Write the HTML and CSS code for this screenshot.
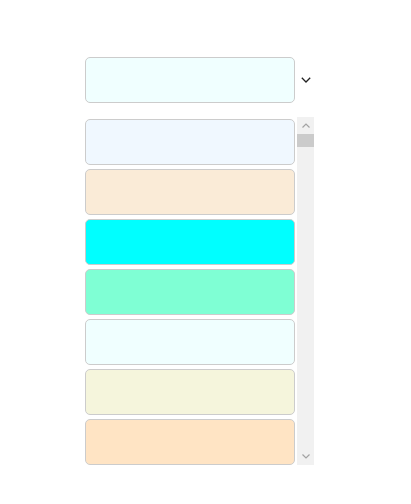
FILE: index.html
```html
<!DOCTYPE html>
<html>
<head>
<meta charset="utf-8">
<link rel="stylesheet" href="styles.css">
</head>
<body>
<div class="picker">
  <div class="selected-row">
    <div class="swatch selected" style="background: azure"></div>
    <svg class="chevron" width="10" height="6" viewBox="0 0 10 6"><path d="M0.8 0.8 L5 5 L9.2 0.8" fill="none" stroke="#222" stroke-width="1.3"/></svg>
  </div>
  <div class="list-wrap">
  <div class="list">
    <div class="swatch" style="background: aliceblue"></div>
    <div class="swatch" style="background: antiquewhite"></div>
    <div class="swatch" style="background: aqua"></div>
    <div class="swatch" style="background: aquamarine"></div>
    <div class="swatch" style="background: azure"></div>
    <div class="swatch" style="background: beige"></div>
    <div class="swatch" style="background: bisque"></div>
    <div class="swatch" style="background: black"></div>
    <div class="swatch" style="background: blanchedalmond"></div>
    <div class="swatch" style="background: blue"></div>
    <div class="swatch" style="background: blueviolet"></div>
    <div class="swatch" style="background: brown"></div>
    <div class="swatch" style="background: burlywood"></div>
    <div class="swatch" style="background: cadetblue"></div>
    <div class="swatch" style="background: chartreuse"></div>
    <div class="swatch" style="background: chocolate"></div>
    <div class="swatch" style="background: coral"></div>
    <div class="swatch" style="background: cornflowerblue"></div>
    <div class="swatch" style="background: cornsilk"></div>
    <div class="swatch" style="background: crimson"></div>
    <div class="swatch" style="background: cyan"></div>
    <div class="swatch" style="background: darkblue"></div>
    <div class="swatch" style="background: darkcyan"></div>
    <div class="swatch" style="background: darkgoldenrod"></div>
    <div class="swatch" style="background: darkgray"></div>
    <div class="swatch" style="background: darkgreen"></div>
    <div class="swatch" style="background: darkgrey"></div>
    <div class="swatch" style="background: darkkhaki"></div>
    <div class="swatch" style="background: darkmagenta"></div>
    <div class="swatch" style="background: darkolivegreen"></div>
    <div class="swatch" style="background: darkorange"></div>
    <div class="swatch" style="background: darkorchid"></div>
    <div class="swatch" style="background: darkred"></div>
    <div class="swatch" style="background: darksalmon"></div>
    <div class="swatch" style="background: darkseagreen"></div>
    <div class="swatch" style="background: darkslateblue"></div>
    <div class="swatch" style="background: darkslategray"></div>
    <div class="swatch" style="background: darkturquoise"></div>
    <div class="swatch" style="background: darkviolet"></div>
    <div class="swatch" style="background: deeppink"></div>
    <div class="swatch" style="background: deepskyblue"></div>
    <div class="swatch" style="background: dimgray"></div>
    <div class="swatch" style="background: dodgerblue"></div>
    <div class="swatch" style="background: firebrick"></div>
    <div class="swatch" style="background: floralwhite"></div>
    <div class="swatch" style="background: forestgreen"></div>
    <div class="swatch" style="background: fuchsia"></div>
    <div class="swatch" style="background: gainsboro"></div>
    <div class="swatch" style="background: ghostwhite"></div>
    <div class="swatch" style="background: gold"></div>
    <div class="swatch" style="background: goldenrod"></div>
    <div class="swatch" style="background: gray"></div>
    <div class="swatch" style="background: green"></div>
    <div class="swatch" style="background: greenyellow"></div>
    <div class="swatch" style="background: honeydew"></div>
    <div class="swatch" style="background: hotpink"></div>
    <div class="swatch" style="background: indianred"></div>
    <div class="swatch" style="background: indigo"></div>
    <div class="swatch" style="background: ivory"></div>
    <div class="swatch" style="background: khaki"></div>
    <div class="swatch" style="background: lavender"></div>
    <div class="swatch" style="background: lavenderblush"></div>
    <div class="swatch" style="background: lawngreen"></div>
    <div class="swatch" style="background: lemonchiffon"></div>
    <div class="swatch" style="background: lightblue"></div>
    <div class="swatch" style="background: lightcoral"></div>
    <div class="swatch" style="background: lightcyan"></div>
    <div class="swatch" style="background: lightgoldenrodyellow"></div>
    <div class="swatch" style="background: lightgray"></div>
    <div class="swatch" style="background: lightgreen"></div>
    <div class="swatch" style="background: lightpink"></div>
    <div class="swatch" style="background: lightsalmon"></div>
    <div class="swatch" style="background: lightseagreen"></div>
    <div class="swatch" style="background: lightskyblue"></div>
    <div class="swatch" style="background: lightslategray"></div>
    <div class="swatch" style="background: lightsteelblue"></div>
    <div class="swatch" style="background: lightyellow"></div>
    <div class="swatch" style="background: lime"></div>
    <div class="swatch" style="background: limegreen"></div>
    <div class="swatch" style="background: linen"></div>
    <div class="swatch" style="background: magenta"></div>
    <div class="swatch" style="background: maroon"></div>
    <div class="swatch" style="background: mediumaquamarine"></div>
    <div class="swatch" style="background: mediumblue"></div>
    <div class="swatch" style="background: mediumorchid"></div>
    <div class="swatch" style="background: mediumpurple"></div>
    <div class="swatch" style="background: mediumseagreen"></div>
    <div class="swatch" style="background: mediumslateblue"></div>
    <div class="swatch" style="background: mediumspringgreen"></div>
    <div class="swatch" style="background: mediumturquoise"></div>
    <div class="swatch" style="background: mediumvioletred"></div>
    <div class="swatch" style="background: midnightblue"></div>
    <div class="swatch" style="background: mintcream"></div>
    <div class="swatch" style="background: mistyrose"></div>
    <div class="swatch" style="background: moccasin"></div>
    <div class="swatch" style="background: navajowhite"></div>
    <div class="swatch" style="background: navy"></div>
    <div class="swatch" style="background: oldlace"></div>
    <div class="swatch" style="background: olive"></div>
    <div class="swatch" style="background: olivedrab"></div>
    <div class="swatch" style="background: orange"></div>
    <div class="swatch" style="background: orangered"></div>
    <div class="swatch" style="background: orchid"></div>
    <div class="swatch" style="background: palegoldenrod"></div>
    <div class="swatch" style="background: palegreen"></div>
    <div class="swatch" style="background: paleturquoise"></div>
    <div class="swatch" style="background: palevioletred"></div>
    <div class="swatch" style="background: papayawhip"></div>
    <div class="swatch" style="background: peachpuff"></div>
    <div class="swatch" style="background: peru"></div>
    <div class="swatch" style="background: pink"></div>
    <div class="swatch" style="background: plum"></div>
    <div class="swatch" style="background: powderblue"></div>
    <div class="swatch" style="background: purple"></div>
    <div class="swatch" style="background: rebeccapurple"></div>
    <div class="swatch" style="background: red"></div>
    <div class="swatch" style="background: rosybrown"></div>
    <div class="swatch" style="background: royalblue"></div>
    <div class="swatch" style="background: saddlebrown"></div>
    <div class="swatch" style="background: salmon"></div>
    <div class="swatch" style="background: sandybrown"></div>
    <div class="swatch" style="background: seagreen"></div>
    <div class="swatch" style="background: seashell"></div>
    <div class="swatch" style="background: sienna"></div>
    <div class="swatch" style="background: silver"></div>
    <div class="swatch" style="background: skyblue"></div>
    <div class="swatch" style="background: slateblue"></div>
    <div class="swatch" style="background: slategray"></div>
    <div class="swatch" style="background: snow"></div>
    <div class="swatch" style="background: springgreen"></div>
    <div class="swatch" style="background: steelblue"></div>
    <div class="swatch" style="background: tan"></div>
    <div class="swatch" style="background: teal"></div>
    <div class="swatch" style="background: thistle"></div>
    <div class="swatch" style="background: tomato"></div>
    <div class="swatch" style="background: turquoise"></div>
    <div class="swatch" style="background: violet"></div>
    <div class="swatch" style="background: wheat"></div>
    <div class="swatch" style="background: white"></div>
    <div class="swatch" style="background: whitesmoke"></div>
    <div class="swatch" style="background: yellow"></div>
    <div class="swatch" style="background: yellowgreen"></div>
  </div>
  <div class="scrollbar" aria-hidden="true">
    <div class="sb-btn">
      <svg width="8" height="5" viewBox="0 0 8 5"><path d="M0.5 4.5 L4 1 L7.5 4.5" fill="none" stroke="#a3a3a3" stroke-width="1.2"/></svg>
    </div>
    <div class="sb-track"><div class="sb-thumb"></div></div>
    <div class="sb-btn">
      <svg width="8" height="5" viewBox="0 0 8 5"><path d="M0.5 0.5 L4 4 L7.5 0.5" fill="none" stroke="#a3a3a3" stroke-width="1.2"/></svg>
    </div>
  </div>
  </div>
</div>
</body>
</html>
```

FILE: styles.css
```css
html, body {
  margin: 0;
  padding: 0;
  background: #fff;
  font-family: "Liberation Sans", Arial, sans-serif;
}

.picker {
  padding: 57px 0 0 85px;
}

.selected-row {
  display: flex;
  align-items: center;
  gap: 6px;
}

.swatch {
  box-sizing: border-box;
  width: 210px;
  height: 46px;
  border: 1px solid #cccccc;
  border-radius: 5px;
  flex: none;
}

.chevron {
  display: block;
  flex: none;
}

.list-wrap {
  display: flex;
  gap: 2px;
  margin-top: 14px;
  height: 348px;
}

.list {
  width: 210px;
  box-sizing: border-box;
  padding-top: 2px;
  overflow-y: scroll;
  scrollbar-width: none;
}

.list::-webkit-scrollbar {
  display: none;
}

.list .swatch {
  margin-bottom: 4px;
}

.scrollbar {
  width: 17px;
  display: flex;
  flex-direction: column;
  background: #f1f1f1;
}

.sb-btn {
  height: 17px;
  flex: none;
  display: flex;
  align-items: center;
  justify-content: center;
}

.sb-btn svg {
  display: block;
}

.sb-track {
  flex: 1;
}

.sb-thumb {
  height: 13px;
  background: #cbcbcb;
}
```
